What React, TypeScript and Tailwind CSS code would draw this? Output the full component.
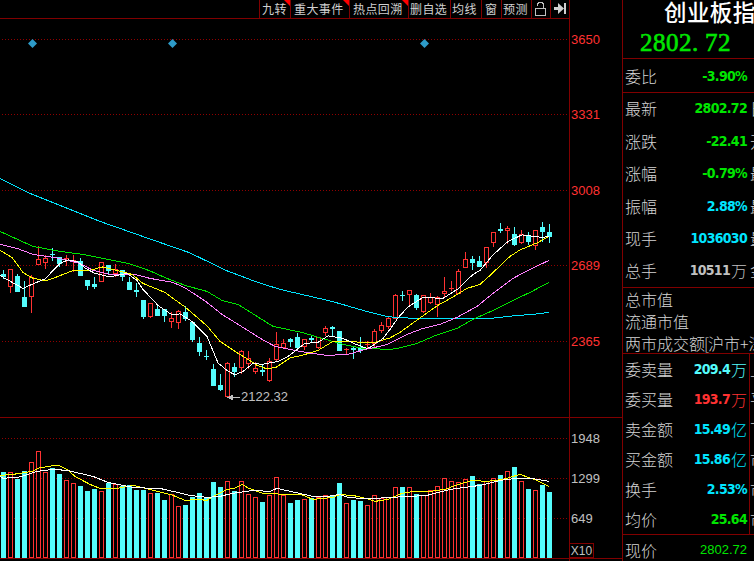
type Row = { label: string; value: string; unit?: string; tone: string; next: string; h: string }

// [up, high, bodyTop, bodyBottom, low, volumeTop]
const candles = [
  [0, 270, 274, 277, 279, 472], [1, 269, 269, 287, 293, 472], [0, 274, 276, 292, 292, 479], [0, 281, 297, 307, 307, 471],
  [1, 275, 277, 297, 313, 462], [1, 246, 259, 265, 265, 451], [1, 255, 258, 263, 269, 472], [0, 248, 254, 255, 261, 468],
  [0, 257, 257, 264, 267, 474], [1, 255, 258, 260, 266, 480], [1, 255, 260, 261, 272, 483], [0, 258, 261, 276, 276, 486],
  [0, 280, 280, 286, 290, 491], [0, 277, 284, 287, 289, 489], [1, 262, 262, 282, 282, 491], [0, 265, 265, 271, 274, 483],
  [1, 264, 269, 274, 277, 484], [0, 270, 270, 277, 281, 486], [0, 277, 282, 290, 290, 485], [0, 283, 290, 292, 297, 490],
  [0, 300, 300, 317, 319, 490], [1, 303, 303, 317, 318, 493], [0, 304, 309, 316, 316, 493], [0, 309, 309, 316, 322, 500],
  [1, 312, 318, 322, 328, 494], [1, 310, 311, 323, 329, 506], [0, 306, 312, 319, 321, 505], [0, 322, 322, 340, 342, 497],
  [0, 337, 343, 352, 356, 493], [0, 350, 356, 357, 360, 497], [0, 364, 369, 386, 386, 482], [0, 374, 385, 390, 391, 487],
  [1, 362, 363, 397, 398, 481], [0, 363, 367, 372, 377, 491], [1, 350, 351, 368, 374, 481], [1, 351, 358, 364, 369, 494],
  [1, 362, 368, 372, 374, 497], [0, 364, 370, 372, 376, 502], [1, 358, 361, 381, 382, 495], [1, 332, 344, 360, 361, 477],
  [1, 339, 343, 348, 349, 495], [0, 338, 339, 342, 347, 503], [0, 333, 337, 348, 349, 500], [1, 339, 339, 347, 350, 499],
  [0, 335, 338, 340, 343, 498], [1, 337, 337, 348, 349, 497], [1, 326, 328, 333, 336, 495], [0, 326, 327, 329, 336, 495],
  [0, 331, 331, 351, 351, 483], [1, 348, 349, 350, 354, 503], [0, 346, 348, 350, 359, 500], [0, 337, 347, 351, 353, 501],
  [1, 341, 344, 346, 349, 505], [1, 329, 331, 344, 349, 495], [1, 322, 325, 331, 333, 498], [1, 317, 318, 327, 329, 497],
  [1, 294, 295, 319, 319, 487], [0, 291, 295, 296, 301, 487], [1, 290, 290, 295, 307, 487], [0, 294, 295, 308, 310, 494],
  [1, 295, 295, 312, 313, 495], [1, 293, 297, 303, 304, 490], [1, 296, 297, 305, 317, 486], [1, 277, 291, 294, 297, 478],
  [1, 281, 288, 290, 291, 481], [1, 269, 271, 294, 294, 482], [1, 252, 259, 268, 268, 479], [0, 256, 259, 263, 270, 476],
  [0, 256, 261, 267, 267, 484], [1, 247, 247, 263, 268, 481], [1, 232, 232, 243, 247, 478], [0, 223, 229, 231, 233, 475],
  [1, 226, 228, 231, 244, 471], [0, 227, 234, 245, 246, 467], [1, 230, 234, 243, 244, 481], [0, 232, 235, 242, 245, 489],
  [1, 230, 230, 246, 250, 490], [0, 222, 227, 232, 242, 485], [0, 224, 232, 237, 243, 492],
]

const averages = [
  { color: "#00e5ff", points: "0,178 10,183 30,193 60,205 100,221 144,236.5 190,252.5 226,270 255,281 280,289 332,301 370,312 387,316 400,317.5 437,318 490,318 513,315.5 537,313.5 549,312" },
  { color: "#00e600", points: "0,231 33,246 60,251 83,254 130,263.5 150,270.5 167,278 185,285 207,291 222,300 238,304 273,326 302,332 322,338 343,344 365,348.5 377,348.5 390,349 400,347.5 417,343 437,334.5 457,328 473,319 493,310 513,300 530,292 549,282" },
  { color: "#ff80ff", points: "0,244 17,248 33,254 60,258 80,263 93,270 110,274 137,274.5 150,278 173,282 185,287.5 205,300.5 222,314 235,322 262,339 275,346 295,350 312,353 327,355 348,354 365,349 377,346.5 387,344 407,334 423,328 440,324 457,317 477,306 493,293 513,278 530,269 549,260" },
  { color: "#ffff00", points: "0,250 12,257 23,272 32,277.5 45,280.5 53,278 72,270.5 90,270 102,266.5 117,270 132,274 143,283 165,292 173,298 185,306.5 207,325.5 220,341 235,351 248,359 257,365 267,368.5 276,367 290,357.5 302,355 318,350 333,341 345,341 365,342 375,342 390,337.5 400,332 420,317.5 437,305.5 453,296.5 467,288 480,284 490,275 510,256 520,249.5 537,242.5 549,236" },
  { color: "#ffffff", points: "0,275 5,278 23,288 33,283.5 45,278.5 60,263 68,259.5 78,261.5 85,267.5 95,273 110,276.5 127,273 137,280 143,289 158,305 172,314.5 180,313.5 192,321 207,336 218,362.5 227,370 235,374.5 243,371 253,363 262,364 278,361 288,356 305,343 318,342 328,335.5 343,338 355,343.5 367,348 370,347 383,338 390,329 398,317.5 408,306.5 423,297 443,298 458,288.5 473,274 480,270 493,254.5 508,241 522,234.5 542,237 549,236" },
  { color: "#ffff00", points: "0,475 13,474 32,471 39,467.5 52,465.5 60,465.5 67,469 75,476 90,484 100,488 117,488 133,485 150,489 172,494.5 185,500 198,499 207,500 213,496 227,489 234,488 242,484 248,487.5 263,493 288,494 302,494.5 313,499 333,497 340,494 355,495.5 368,498.5 375,501 388,499 402,493 413,491 430,491 445,489 457,484.5 472,480 487,481 503,479 520,474 537,480 543,483 549,486" },
  { color: "#ffffff", points: "0,476 3,478 20,476.5 37,471 53,469 67,470 93,476 108,482 133,487 162,488.5 173,491 190,495 207,497 220,496 232,493 253,490 270,491 277,488 295,492 313,496 328,496 339,494 348,497 368,498.5 390,497 410,496 427,495 450,489 480,485 503,479.5 517,478 532,478 549,481" },
]

const quotes: Row[] = [
  { label: "最新", value: "2802.72", tone: "text-[#00e600]", next: "日", h: "h-[32px]" },
  { label: "涨跌", value: "-22.41", tone: "text-[#00e600]", next: "开", h: "h-[33px]" },
  { label: "涨幅", value: "-0.79%", tone: "text-[#00e600]", next: "最", h: "h-[32px]" },
  { label: "振幅", value: "2.88%", tone: "text-[#00e5ff]", next: "最", h: "h-[33px]" },
  { label: "现手", value: "1036030", tone: "text-[#00e5ff]", next: "量", h: "h-[32px]" },
  { label: "总手", value: "10511", unit: "万", tone: "text-[#c0c0c0]", next: "金", h: "h-[32px]" },
]

const orders: Row[] = [
  { label: "委卖量", value: "209.4", unit: "万", tone: "text-[#54fcfc]", next: "上", h: "h-[30px]" },
  { label: "委买量", value: "193.7", unit: "万", tone: "text-[#ff3232]", next: "平", h: "h-[30px]" },
  { label: "卖金额", value: "15.49", unit: "亿", tone: "text-[#00e5ff]", next: "下", h: "h-[30px]" },
  { label: "买金额", value: "15.86", unit: "亿", tone: "text-[#00e5ff]", next: "市", h: "h-[30px]" },
  { label: "换手", value: "2.53%", tone: "text-[#00e5ff]", next: "市", h: "h-[30px]" },
  { label: "均价", value: "25.64", tone: "text-[#00e600]", next: "市", h: "h-[30px]" },
]

const tools = [
  { text: "九转", w: "w-[31px] pl-[2px]", hot: true },
  { text: "重大事件", w: "w-[59px] pl-[3px]", hot: true },
  { text: "热点回溯", w: "w-[59px] pl-[3px]", hot: true },
  { text: "删自选", w: "w-[42px] pl-[1px]" },
  { text: "均线", w: "w-[31px] pl-[1px]" },
  { text: "窗", w: "w-[20px] pl-[3px]" },
  { text: "预测", w: "w-[30px] pl-[1px]" },
]

function Toolbar() {
  return (
    <div className="flex h-[19px] w-[570px] justify-end border-r border-b border-[#800000] text-[12px] text-[#d0d0d0]">
      {tools.map((t) => (
        <div key={t.text} className={`relative flex items-center border-l border-[#800000] whitespace-nowrap tracking-[0.4px] ${t.w}`}>
          {t.text}
          {t.hot && <span className="absolute top-0 right-0 border-t-[6px] border-l-[6px] border-t-[#ff0000] border-l-transparent" />}
        </div>
      ))}
      <div className="w-[19px] border-l border-[#800000]">
        <svg width="18" height="18" fill="none" stroke="#c0c0c0" shapeRendering="crispEdges">
          <path d="M3.5 8.5h10v7h-10z M5.5 6V3.5h1v-1h4v1h1v5" />
        </svg>
      </div>
      <div className="w-[19px] border-l border-[#800000]">
        <svg width="18" height="18" fill="#d0d0d0">
          <path d="M3 7h4V3l6 5.5L7 14v-4H3zM13 3h2v11h-2z" />
        </svg>
      </div>
    </div>
  )
}

function Chart() {
  return (
    <svg width="569" height="542" viewBox="0 19 569 542" className="block shrink-0" shapeRendering="crispEdges">
      {[39, 114, 190, 265, 341, 438, 478, 518].map((y) => (
        <line key={y} x1="2" x2="569" y1={y + 0.5} y2={y + 0.5} stroke="#900000" strokeDasharray="1 2" />
      ))}
      <path d="M0 417.5H569" stroke="#800000" />
      <path d="M0 558.5H569" stroke="#800000" />
      {[32, 172, 424].map((x) => (
        <path key={x} d={`M${x + 0.5} 39l4.5 4.5l-4.5 4.5l-4.5-4.5z`} fill="#2d9bc8" shapeRendering="auto" />
      ))}
      {candles.map(([up, high, top, bottom, low, vol], i) => {
        const x = 1 + i * 7
        if (up) {
          const h = Math.max(bottom - top - 1, 0)
          return (
            <g key={i} stroke="#ff3232" fill="#000">
              <path d={`M${x + 2.5} ${high}V${low}`} />
              {h > 1 ? <rect x={x + 0.5} y={top + 0.5} width="4" height={h} /> : <path d={`M${x} ${top + 0.5}h5`} />}
              <rect x={x + 0.5} y={vol + 0.5} width="4" height={557 - vol} />
            </g>
          )
        }
        return (
          <g key={i} fill="#54fcfc">
            <rect x={x + 2} y={high} width="1" height={low - high} />
            <rect x={x} y={top} width="5" height={bottom - top} />
            <rect x={x} y={vol} width="5" height={558 - vol} />
          </g>
        )
      })}
      <g fill="none" transform="translate(0 0.4)">
        {averages.map((a, i) => <polyline key={i} points={a.points} stroke={a.color} />)}
      </g>
      <path d="M228 397.5h12M228 397.5l4-2v4z" stroke="#c0c0c0" fill="#c0c0c0" />
      <text x="241" y="401" fontSize="13" fill="#c0c0c0" fontFamily="Liberation Sans, sans-serif">2122.32</text>
    </svg>
  )
}

function Axis() {
  return (
    <div className="flex h-[542px] w-[53px] flex-col border-l border-[#800000] font-['Liberation_Sans',sans-serif] text-[13px] leading-[16px]">
      <div className="flex h-[399px] flex-col border-b border-[#800000] pt-[13px] pl-[1px] text-[#ff3232]">
        <div className="h-[75px]">3650</div>
        <div className="h-[76px]">3331</div>
        <div className="h-[75px]">3008</div>
        <div className="h-[76px]">2689</div>
        <div>2365</div>
      </div>
      <div className="flex h-[141px] flex-col border-b border-[#800000] pt-[13px] text-[#c0c0c0]">
        <div className="h-[40px] pl-[1px]">1948</div>
        <div className="h-[40px] pl-[1px]">1299</div>
        <div className="h-[32px] pl-[1px]">649</div>
        <div className="flex h-[15px] w-[24px] items-center justify-center border border-l-0 border-[#800000] text-[12px]">X10</div>
      </div>
    </div>
  )
}

function QuoteRow({ row, divided }: { row: Row; divided?: boolean }) {
  return (
    <div className={`flex shrink-0 items-center ${row.h}`}>
      <span className="w-[56px] shrink-0 whitespace-nowrap">{row.label}</span>
      <span className={`flex w-[66px] shrink-0 items-center justify-end ${row.tone}`}>
        <span className="font-['DejaVu_Sans_Condensed','DejaVu_Sans',sans-serif] text-[14px] font-bold tracking-[-0.7px] [font-stretch:condensed]">{row.value}</span>
        {row.unit && <span className="ml-[1px]">{row.unit}</span>}
      </span>
      <span className={`ml-[2px] flex h-full shrink-0 items-center ${divided ? "border-l border-[#800000]" : "pl-[1px]"}`}>{row.next}</span>
    </div>
  )
}

function QuotePanel() {
  return (
    <aside className="h-[561px] w-[132px] overflow-hidden border-l border-[#800000] text-[16px] leading-[20px] font-light text-[#d4d4d4]">
      <div className="h-[59px] overflow-hidden border-b border-[#800000]">
        <div className="h-[26px] pl-[41px] text-[22.5px] leading-[23px] font-medium tracking-[0.4px] whitespace-nowrap text-white">创业板指</div>
        <div className="flex pl-[16px] font-['Liberation_Serif',serif] text-[25px] leading-[34px] font-normal text-[#00e600] [-webkit-text-stroke:0.6px_#00e600]">
          {"2802.72".split("").map((c, i) => <span key={i} className="w-[13px] pl-[1px]">{c}</span>)}
        </div>
      </div>
      <div className="h-[34px] border-b border-[#800000] pl-[2px]">
        <QuoteRow row={{ label: "委比", value: "-3.90%", tone: "text-[#00e600]", next: "", h: "h-[33px]" }} />
      </div>
      <div className="flex h-[195px] flex-col justify-end border-b border-[#800000] pb-[1px] pl-[2px]">
        {quotes.map((r) => <QuoteRow key={r.label} row={r} />)}
      </div>
      <div className="h-[66px] overflow-hidden border-b border-[#800000] pl-[2px] leading-[22px] whitespace-nowrap">
        <div>总市值</div>
        <div>流通市值</div>
        <div>两市成交额<span className="-mx-[1px]">[</span>沪市+深</div>
      </div>
      <div className="h-[181px] border-b border-[#800000] pl-[2px]">
        {orders.map((r) => <QuoteRow key={r.label} row={r} divided />)}
      </div>
      <div className="flex h-[30px] items-center pl-[2px]">
        <span className="w-[56px]">现价</span>
        <span className="w-[66px] text-right font-['Liberation_Sans',sans-serif] text-[13px] font-normal text-[#00e600]">2802.72</span>
      </div>
    </aside>
  )
}

export default function App() {
  return (
    <div className="flex h-[561px] w-[754px] overflow-hidden bg-black font-['Noto_Sans_CJK_SC',sans-serif]">
      <main className="w-[622px] shrink-0">
        <Toolbar />
        <div className="flex">
          <Chart />
          <Axis />
        </div>
      </main>
      <QuotePanel />
    </div>
  )
}
